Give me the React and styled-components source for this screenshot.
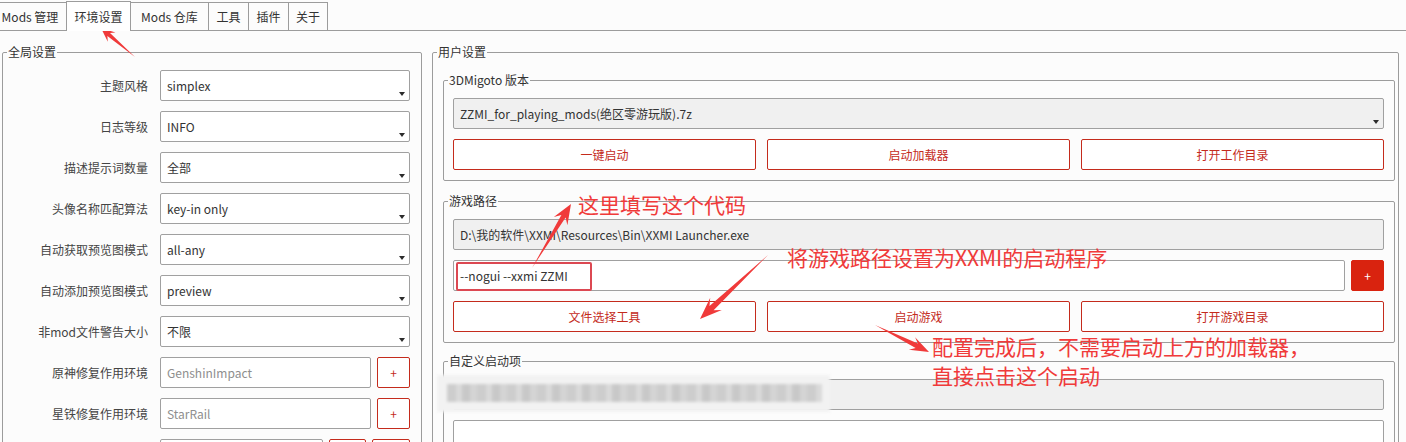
import React from 'react';
import styled, { createGlobalStyle } from 'styled-components';

const RED = '#d9230f';
const LINE = '#9c9c9c';
const INK = '#f03a3a';

const GlobalStyle = createGlobalStyle`
  html, body {
    margin: 0;
    padding: 0;
    background: #fcfcfc;
  }
  body {
    font-family: "Noto Sans CJK SC", "Noto Sans", sans-serif;
    font-size: 12px;
    color: #333;
  }
  * {
    box-sizing: border-box;
  }
`;

const Window = styled.div`
  position: relative;
  width: 1406px;
  height: 442px;
  overflow: hidden;
  background: #fcfcfc;
  display: flex;
  flex-direction: column;
`;

const TabBar = styled.div`
  height: 31px;
  flex-shrink: 0;
  border-bottom: 1px solid ${LINE};
`;

const TabList = styled.div`
  display: flex;
  align-items: flex-end;
  height: 30px;
  margin-left: -7px;
`;

const Tab = styled.div`
  position: relative;
  width: ${p => p.$w}px;
  height: ${p => (p.$active ? 30 : 28)}px;
  margin-bottom: ${p => (p.$active ? -1 : 0)}px;
  border: 1px solid ${LINE};
  border-bottom: none;
  background: ${p => (p.$active ? '#ffffff' : '#fcfcfc')};
  z-index: ${p => (p.$active ? 1 : 0)};
  display: flex;
  align-items: center;
  justify-content: center;
  white-space: nowrap;
  color: #333;
  & + & {
    margin-left: -1px;
  }
`;

const Body = styled.div`
  display: flex;
  flex: 1;
  min-height: 0;
`;

const LeftPane = styled.div`
  width: 422px;
  flex-shrink: 0;
  padding: 13px 0 0 2px;
`;

const RightPane = styled.div`
  flex: 1;
  min-width: 0;
  padding: 13px 7px 0 10px;
`;

const Group = styled.fieldset`
  margin: ${p => p.$mt || 0}px 0 0;
  padding: 0;
  min-width: 0;
  border: 1px solid ${LINE};
  border-radius: 2px;
`;

const Legend = styled.legend`
  margin-left: 4px;
  padding: 0 1px;
  font-size: 12px;
  line-height: 16px;
  color: #333;
`;

const FormGrid = styled.div`
  display: grid;
  grid-template-columns: 145px 1fr;
  column-gap: 12px;
  row-gap: 10px;
  padding: 10px 11px 20px 0;
`;

const Label = styled.div`
  align-self: center;
  text-align: right;
  white-space: nowrap;
  color: #444;
`;

const Field = styled.div`
  flex: 1 0 auto;
  min-width: 0;
  height: 31px;
  border: 1px solid #a0a0a0;
  border-radius: 2px;
  background: ${p => (p.$readonly ? '#f0f0f0' : '#ffffff')};
  display: flex;
  align-items: center;
  padding: 0 4px 0 6px;
  color: ${p => (p.$muted ? '#8e8e8e' : '#333')};
  white-space: nowrap;
`;

const Value = styled.span`
  flex: 1;
  overflow: hidden;
`;

const Caret = styled.span`
  align-self: flex-end;
  margin-bottom: 4px;
  width: 0;
  height: 0;
  border-left: 3.5px solid transparent;
  border-right: 3.5px solid transparent;
  border-top: 4px solid #2b2b2b;
`;

const Line = styled.div`
  display: flex;
  gap: 6px;
`;

const Button = styled.button`
  flex-shrink: 0;
  width: ${p => (p.$w ? `${p.$w}px` : 'auto')};
  height: 31px;
  padding: 0;
  border: 1px solid ${p => (p.$solid ? RED : '#c42b1c')};
  border-radius: 2px;
  background: ${p => (p.$solid ? RED : '#ffffff')};
  color: ${p => (p.$solid ? '#ffffff' : '#c42b1c')};
  font-family: inherit;
  font-size: 12px;
`;

const Stack = styled.div`
  display: flex;
  flex-direction: column;
  gap: 10px;
  padding: ${p => p.$pad};
`;

const ButtonRow = styled.div`
  display: grid;
  grid-template-columns: repeat(3, 1fr);
  gap: 11px;
`;

const MultiLine = styled.div`
  flex-shrink: 0;
  height: 60px;
  border: 1px solid #a0a0a0;
  border-radius: 2px;
  background: #ffffff;
`;

const RedactWrap = styled.div`
  position: relative;
  display: flex;
`;

const Redact = styled.div`
  position: absolute;
  left: -16px;
  top: -4px;
  width: 393px;
  height: 37px;
  background: #f2f2f2;
  filter: blur(1.5px);
  &::after {
    content: '';
    position: absolute;
    left: 10px;
    top: 9px;
    width: 375px;
    height: 18px;
    background: repeating-linear-gradient(
      90deg,
      #cdcdcd 0 9px,
      #d9d9d9 9px 15px,
      #c8c8c8 15px 23px,
      #d4d4d4 23px 30px
    );
  }
`;

const Overlay = styled.div`
  position: absolute;
  inset: 0;
  pointer-events: none;
`;

const Note = styled.div`
  position: absolute;
  left: ${p => p.$x}px;
  top: ${p => p.$y}px;
  color: ${INK};
  font-size: 21px;
  line-height: 29px;
  white-space: nowrap;
`;

const Highlight = styled.div`
  position: absolute;
  left: 456px;
  top: 262px;
  width: 136px;
  height: 29px;
  border: 2px solid #dc4852;
  border-radius: 2px;
`;

const Arrows = styled.svg`
  position: absolute;
  left: 0;
  top: 0;
`;

const tabs = [
  { name: 'Mods 管理', w: 74 },
  { name: '环境设置', w: 65, active: true },
  { name: 'Mods 仓库', w: 79 },
  { name: '工具', w: 41 },
  { name: '插件', w: 41 },
  { name: '关于', w: 40 },
];

const combos = [
  { label: '主题风格', value: 'simplex' },
  { label: '日志等级', value: 'INFO' },
  { label: '描述提示词数量', value: '全部' },
  { label: '头像名称匹配算法', value: 'key-in only' },
  { label: '自动获取预览图模式', value: 'all-any' },
  { label: '自动添加预览图模式', value: 'preview' },
  { label: '非mod文件警告大小', value: '不限' },
];

const envs = [
  { label: '原神修复作用环境', value: 'GenshinImpact' },
  { label: '星铁修复作用环境', value: 'StarRail' },
];

// tapered screenshot-tool arrow, tail -> tip
function arrow(x1, y1, x2, y2, head, wing, shaft) {
  const len = Math.hypot(x2 - x1, y2 - y1);
  const ux = (x2 - x1) / len;
  const uy = (y2 - y1) / len;
  const nx = -uy;
  const ny = ux;
  const nk = [x2 - ux * head * 0.72, y2 - uy * head * 0.72];
  const bs = [x2 - ux * head, y2 - uy * head];
  const pts = [
    [x1, y1],
    [nk[0] + (nx * shaft) / 2, nk[1] + (ny * shaft) / 2],
    [bs[0] + (nx * wing) / 2, bs[1] + (ny * wing) / 2],
    [x2, y2],
    [bs[0] - (nx * wing) / 2, bs[1] - (ny * wing) / 2],
    [nk[0] - (nx * shaft) / 2, nk[1] - (ny * shaft) / 2],
  ];
  return pts.map(p => p.map(v => v.toFixed(1)).join(',')).join(' ');
}

const arrows = [
  [135, 57, 101, 28, 14, 12, 4],
  [532, 268, 571, 204, 20, 16, 5],
  [768, 255, 700, 319, 22, 17, 6],
  [875, 325, 929, 352, 19, 14, 5],
];

export default () => {
  return (
    <Window>
      <GlobalStyle />
      <TabBar>
        <TabList>
          {tabs.map(t => (
            <Tab key={t.name} $w={t.w} $active={t.active}>
              {t.name}
            </Tab>
          ))}
        </TabList>
      </TabBar>

      <Body>
        <LeftPane>
          <Group>
            <Legend>全局设置</Legend>
            <FormGrid>
              {combos.map(c => (
                <React.Fragment key={c.label}>
                  <Label>{c.label}</Label>
                  <Field>
                    <Value>{c.value}</Value>
                    <Caret />
                  </Field>
                </React.Fragment>
              ))}
              {envs.map(e => (
                <React.Fragment key={e.label}>
                  <Label>{e.label}</Label>
                  <Line>
                    <Field $muted>{e.value}</Field>
                    <Button $w={33}>+</Button>
                  </Line>
                </React.Fragment>
              ))}
              <Label />
              <Line>
                <Field />
                <Button $w={37} />
                <Button $w={38} />
              </Line>
            </FormGrid>
          </Group>
        </LeftPane>

        <RightPane>
          <Group>
            <Legend>用户设置</Legend>
            <Stack $pad="12px 3px 20px 10px">
              <Group>
                <Legend>3DMigoto 版本</Legend>
                <Stack $pad="10px 10px 10px 9px">
                  <Field $readonly>
                    <Value>ZZMI_for_playing_mods(绝区零游玩版).7z</Value>
                    <Caret />
                  </Field>
                  <ButtonRow>
                    <Button>一键启动</Button>
                    <Button>启动加载器</Button>
                    <Button>打开工作目录</Button>
                  </ButtonRow>
                </Stack>
              </Group>

              <Group $mt={2}>
                <Legend>游戏路径</Legend>
                <Stack $pad="10px 10px 10px 9px">
                  <Field $readonly>D:\我的软件\XXMI\Resources\Bin\XXMI Launcher.exe</Field>
                  <Line>
                    <Field>--nogui --xxmi ZZMI</Field>
                    <Button $w={33} $solid>+</Button>
                  </Line>
                  <ButtonRow>
                    <Button>文件选择工具</Button>
                    <Button>启动游戏</Button>
                    <Button>打开游戏目录</Button>
                  </ButtonRow>
                </Stack>
              </Group>

              <Group $mt={0}>
                <Legend>自定义启动项</Legend>
                <Stack $pad="10px 10px 10px 9px">
                  <RedactWrap>
                    <Field $readonly />
                    <Redact />
                  </RedactWrap>
                  <MultiLine />
                </Stack>
              </Group>
            </Stack>
          </Group>
        </RightPane>
      </Body>

      <Overlay>
        <Arrows width="1406" height="442" viewBox="0 0 1406 442">
          {arrows.map((a, i) => (
            <polygon key={i} points={arrow(...a)} fill={INK} />
          ))}
        </Arrows>
        <Highlight />
        <Note $x={578} $y={190}>这里填写这个代码</Note>
        <Note $x={787} $y={243}>将游戏路径设置为XXMI的启动程序</Note>
        <Note $x={932} $y={332}>
          配置完成后，不需要启动上方的加载器，
          <br />
          直接点击这个启动
        </Note>
      </Overlay>
    </Window>
  );
};
